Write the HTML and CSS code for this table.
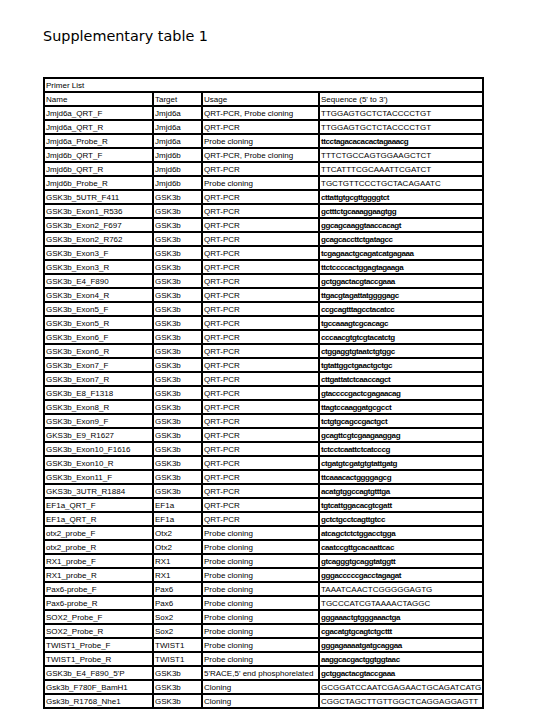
FILE: index.html
```html
<!DOCTYPE html>
<html>
<head>
<meta charset="utf-8">
<link rel="stylesheet" href="styles.css">
</head>
<body>
<div class="page">
<h1 class="title">Supplementary table 1</h1>
<div class="grid">
<div class="c span">Primer List</div>
<div class="c">Name</div><div class="c">Target</div><div class="c">Usage</div><div class="c">Sequence (5' to 3')</div>
<div class="c">Jmjd6a_QRT_F</div><div class="c">Jmjd6a</div><div class="c">QRT-PCR, Probe cloning</div><div class="c">TTGGAGTGCTCTACCCCTGT</div>
<div class="c">Jmjd6a_QRT_R</div><div class="c">Jmjd6a</div><div class="c">QRT-PCR</div><div class="c">TTGGAGTGCTCTACCCCTGT</div>
<div class="c">Jmjd6a_Probe_R</div><div class="c">Jmjd6a</div><div class="c">Probe cloning</div><div class="c lc">ttcctagacacacactagaaacg</div>
<div class="c">Jmjd6b_QRT_F</div><div class="c">Jmjd6b</div><div class="c">QRT-PCR, Probe cloning</div><div class="c">TTTCTGCCAGTGGAAGCTCT</div>
<div class="c">Jmjd6b_QRT_R</div><div class="c">Jmjd6b</div><div class="c">QRT-PCR</div><div class="c">TTCATTTCGCAAATTCGATCT</div>
<div class="c">Jmjd6b_Probe_R</div><div class="c">Jmjd6b</div><div class="c">Probe cloning</div><div class="c">TGCTGTTCCCTGCTACAGAATC</div>
<div class="c">GSK3b_5UTR_F411</div><div class="c">GSK3b</div><div class="c">QRT-PCR</div><div class="c lc">cttattgtgcgttggggtct</div>
<div class="c">GSK3b_Exon1_R536</div><div class="c">GSK3b</div><div class="c">QRT-PCR</div><div class="c lc">gctttctgcaaaggaagtgg</div>
<div class="c">GSK3b_Exon2_F697</div><div class="c">GSK3b</div><div class="c">QRT-PCR</div><div class="c lc">ggcagcaaggtaaccacagt</div>
<div class="c">GSK3b_Exon2_R762</div><div class="c">GSK3b</div><div class="c">QRT-PCR</div><div class="c lc">gcagcaccttctgatagcc</div>
<div class="c">GSK3b_Exon3_F</div><div class="c">GSK3b</div><div class="c">QRT-PCR</div><div class="c lc">tcgagaactgcagatcatgagaaa</div>
<div class="c">GSK3b_Exon3_R</div><div class="c">GSK3b</div><div class="c">QRT-PCR</div><div class="c lc">ttctccccactggagtagaaga</div>
<div class="c">GSK3b_E4_F890</div><div class="c">GSK3b</div><div class="c">QRT-PCR</div><div class="c lc">gctggactacgtaccgaaa</div>
<div class="c">GSK3b_Exon4_R</div><div class="c">GSK3b</div><div class="c">QRT-PCR</div><div class="c lc">ttgacgtagattatggggagc</div>
<div class="c">GSK3b_Exon5_F</div><div class="c">GSK3b</div><div class="c">QRT-PCR</div><div class="c lc">ccgcagtttagcctacatcc</div>
<div class="c">GSK3b_Exon5_R</div><div class="c">GSK3b</div><div class="c">QRT-PCR</div><div class="c lc">tgccaaagtcgcacagc</div>
<div class="c">GSK3b_Exon6_F</div><div class="c">GSK3b</div><div class="c">QRT-PCR</div><div class="c lc">cccaacgtgtcgtacatctg</div>
<div class="c">GSK3b_Exon6_R</div><div class="c">GSK3b</div><div class="c">QRT-PCR</div><div class="c lc">ctggaggtgtaatctgtggc</div>
<div class="c">GSK3b_Exon7_F</div><div class="c">GSK3b</div><div class="c">QRT-PCR</div><div class="c lc">tgtattggctgaactgctgc</div>
<div class="c">GSK3b_Exon7_R</div><div class="c">GSK3b</div><div class="c">QRT-PCR</div><div class="c lc">cttgattatctcaaccagct</div>
<div class="c">GSK3b_E8_F1318</div><div class="c">GSK3b</div><div class="c">QRT-PCR</div><div class="c lc">gtaccccgactcgagaacag</div>
<div class="c">GSK3b_Exon8_R</div><div class="c">GSK3b</div><div class="c">QRT-PCR</div><div class="c lc">ttagtccaaggatgcgcct</div>
<div class="c">GSK3b_Exon9_F</div><div class="c">GSK3b</div><div class="c">QRT-PCR</div><div class="c lc">tctgtgcagccgactgct</div>
<div class="c">GKS3b_E9_R1627</div><div class="c">GSK3b</div><div class="c">QRT-PCR</div><div class="c lc">gcagttcgtcgaagaaggag</div>
<div class="c">GSK3b_Exon10_F1616</div><div class="c">GSK3b</div><div class="c">QRT-PCR</div><div class="c lc">tctcctcaattctcatcccg</div>
<div class="c">GSK3b_Exon10_R</div><div class="c">GSK3b</div><div class="c">QRT-PCR</div><div class="c lc">ctgatgtcgatgtgtattgatg</div>
<div class="c">GSK3b_Exon11_F</div><div class="c">GSK3b</div><div class="c">QRT-PCR</div><div class="c lc">ttcaaacactggggagcg</div>
<div class="c">GKS3b_3UTR_R1884</div><div class="c">GSK3b</div><div class="c">QRT-PCR</div><div class="c lc">acatgtggccagtgtttga</div>
<div class="c">EF1a_QRT_F</div><div class="c">EF1a</div><div class="c">QRT-PCR</div><div class="c lc">tgtcattggacacgtcgatt</div>
<div class="c">EF1a_QRT_R</div><div class="c">EF1a</div><div class="c">QRT-PCR</div><div class="c lc">gctctgcctcagttgtcc</div>
<div class="c">otx2_probe_F</div><div class="c">Otx2</div><div class="c">Probe cloning</div><div class="c lc">atcagctctctggacctgga</div>
<div class="c">otx2_probe_R</div><div class="c">Otx2</div><div class="c">Probe cloning</div><div class="c lc">caatccgttgcacaattcac</div>
<div class="c">RX1_probe_F</div><div class="c">RX1</div><div class="c">Probe cloning</div><div class="c lc">gtcagggtgcaggtatggtt</div>
<div class="c">RX1_probe_R</div><div class="c">RX1</div><div class="c">Probe cloning</div><div class="c lc">gggacccccgacctagagat</div>
<div class="c">Pax6-probe_F</div><div class="c">Pax6</div><div class="c">Probe cloning</div><div class="c">TAAATCAACTCGGGGGAGTG</div>
<div class="c">Pax6-probe_R</div><div class="c">Pax6</div><div class="c">Probe cloning</div><div class="c">TGCCCATCGTAAAACTAGGC</div>
<div class="c">SOX2_Probe_F</div><div class="c">Sox2</div><div class="c">Probe cloning</div><div class="c lc">gggaaactgtgggaaactga</div>
<div class="c">SOX2_Probe_R</div><div class="c">Sox2</div><div class="c">Probe cloning</div><div class="c lc">cgacatgtgcagtctgcttt</div>
<div class="c">TWIST1_Probe_F</div><div class="c">TWIST1</div><div class="c">Probe cloning</div><div class="c lc">gggagaaaatgatgcaggaa</div>
<div class="c">TWIST1_Probe_R</div><div class="c">TWIST1</div><div class="c">Probe cloning</div><div class="c lc">aaggcacgactggtggtaac</div>
<div class="c">GSK3b_E4_F890_5'P</div><div class="c">GSK3b</div><div class="c">5'RACE,5' end phosphorelated</div><div class="c lc">gctggactacgtaccgaaa</div>
<div class="c">Gsk3b_F780F_BamH1</div><div class="c">GSK3b</div><div class="c">Cloning</div><div class="c">GCGGATCCAATCGAGAACTGCAGATCATG</div>
<div class="c">Gsk3b_R1768_Nhe1</div><div class="c">GSK3b</div><div class="c">Cloning</div><div class="c">CGGCTAGCTTGTTGGCTCAGGAGGAGTT</div>
</div>
</div>
</body>
</html>
```

FILE: styles.css
```css
html, body {
  margin: 0;
  padding: 0;
  background: #fff;
}
.page {
  padding: 26px 0 0 43px;
}
.title {
  margin: 0;
  font-family: "DejaVu Sans", sans-serif;
  font-weight: normal;
  font-size: 14.4px;
  line-height: 20px;
  color: #000;
}
.grid {
  margin-top: 31px;
  display: grid;
  grid-template-columns: 107px 47px 115px 162px;
  gap: 2px;
  padding: 2px;
  background: #000;
  width: max-content;
}
.c {
  background: #fff;
  height: 12px;
  padding-left: 1px;
  font-family: "Liberation Sans", Arial, sans-serif;
  font-size: 8px;
  line-height: 13px;
  color: #000;
  white-space: nowrap;
  overflow: hidden;
}
.span {
  grid-column: 1 / -1;
}
.lc {
  font-weight: bold;
  letter-spacing: -0.4px;
}
```
